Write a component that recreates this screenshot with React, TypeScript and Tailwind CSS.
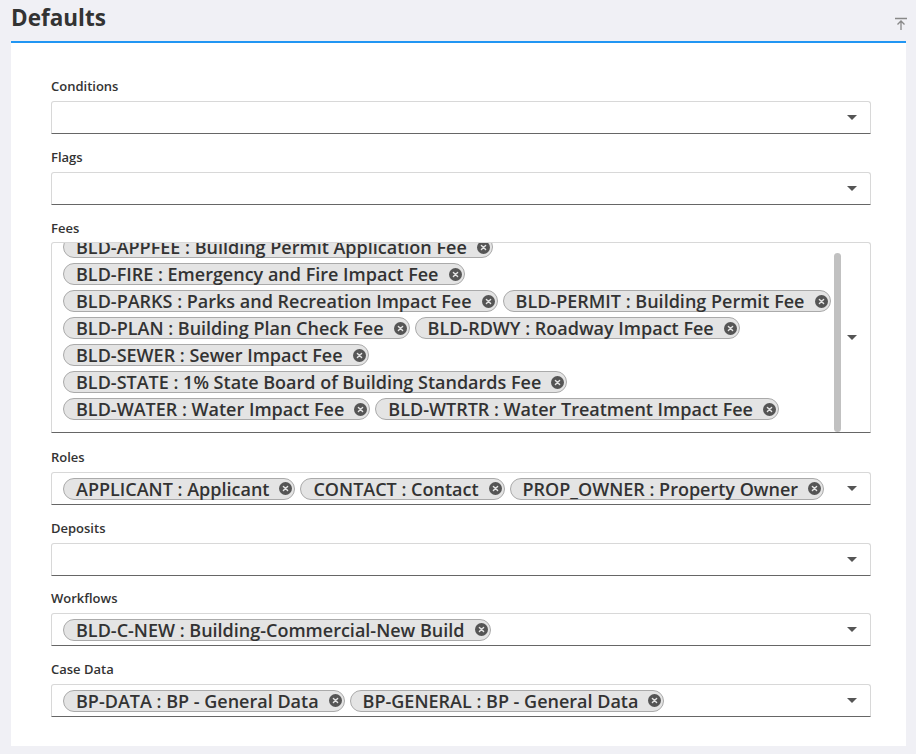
import React from "react";

const fees = [
  "BLD-APPFEE : Building Permit Application Fee",
  "BLD-FIRE : Emergency and Fire Impact Fee",
  "BLD-PARKS : Parks and Recreation Impact Fee",
  "BLD-PERMIT : Building Permit Fee",
  "BLD-PLAN : Building Plan Check Fee",
  "BLD-RDWY : Roadway Impact Fee",
  "BLD-SEWER : Sewer Impact Fee",
  "BLD-STATE : 1% State Board of Building Standards Fee",
  "BLD-WATER : Water Impact Fee",
  "BLD-WTRTR : Water Treatment Impact Fee",
];

const roles = ["APPLICANT : Applicant", "CONTACT : Contact", "PROP_OWNER : Property Owner"];
const workflows = ["BLD-C-NEW : Building-Commercial-New Build"];
const caseData = ["BP-DATA : BP - General Data", "BP-GENERAL : BP - General Data"];

function Chip({ text }: { text: string }) {
  return (
    <span className="inline-flex h-[22px] shrink-0 items-center whitespace-nowrap rounded-full border border-[#aaa] bg-[#e4e4e4] pl-3 pr-[2px] text-[18px] font-semibold leading-none text-[#333]">
      {text}
      <span className="ml-[10px] flex h-[13px] w-[13px] items-center justify-center rounded-full bg-[#555]">
        <svg viewBox="0 0 10 10" className="h-[7px] w-[7px]">
          <path d="M2 2l6 6M8 2l-6 6" stroke="#e4e4e4" strokeWidth="2" strokeLinecap="round" />
        </svg>
      </span>
    </span>
  );
}

function Caret() {
  return (
    <svg viewBox="0 0 10 5" className="h-[5px] w-[10px]">
      <path d="M0 0h10L5 5z" fill="#555" />
    </svg>
  );
}

function Field({
  label,
  items = [],
  className = "mb-[14px]",
}: {
  label: string;
  items?: string[];
  className?: string;
}) {
  return (
    <div className={className}>
      <div className="mb-[6px] text-[13px] font-semibold leading-[18px] text-[#333]">{label}</div>
      <div className="flex h-[33px] items-center rounded-t-[3px] border border-[#d8d8d8] border-b-[#666] bg-white">
        <div className="flex flex-1 gap-[5px] overflow-hidden pl-[11px]">
          {items.map((t) => (
            <Chip key={t} text={t} />
          ))}
        </div>
        <div className="flex w-9 justify-center">
          <Caret />
        </div>
      </div>
    </div>
  );
}

function FeesField() {
  return (
    <div className="mb-[15px]">
      <div className="mb-[5px] text-[13px] font-semibold leading-[18px] text-[#333]">Fees</div>
      <div className="flex h-[191px] rounded-t-[3px] border border-[#d8d8d8] border-b-[#666] bg-white">
        <div className="flex-1 overflow-hidden pl-[11px]">
          {/* list is scrolled a few px down, so the first row is clipped */}
          <div className="-mt-[7px] flex flex-wrap gap-x-[5px] gap-y-[5px]">
            {fees.map((t) => (
              <Chip key={t} text={t} />
            ))}
          </div>
        </div>
        <div className="mt-[10px] w-[7px] rounded-full bg-[#c1c1c1]" />
        <div className="flex w-[29px] items-center pl-[6px]">
          <Caret />
        </div>
      </div>
    </div>
  );
}

export default function App() {
  return (
    <div
      className="min-h-screen bg-[#f0f0f5] pl-[11px] pr-[10px]"
      style={{ fontFamily: '"Open Sans", "Noto Sans", sans-serif' }}
    >
      <div className="flex h-[41px] items-center justify-between pb-[4px]">
        <h1 className="text-[22.5px] font-bold leading-none text-[#333]">Defaults</h1>
        <svg viewBox="0 0 14 14" className="-mr-[2px] mt-[10px] h-[14px] w-[14px]" fill="none" stroke="#888" strokeWidth="1.3">
          <path d="M1 1.5h12M7 13V4M3.5 7.5L7 4l3.5 3.5" />
        </svg>
      </div>
      <div className="border-t-2 border-[#2196f3] bg-white pb-[15px] pl-10 pr-[35px] pt-[34px]">
        <Field label="Conditions" />
        <Field label="Flags" />
        <FeesField />
        <Field label="Roles" items={roles} />
        <Field label="Deposits" className="mb-[13px]" />
        <Field label="Workflows" items={workflows} />
        <Field label="Case Data" items={caseData} />
      </div>
    </div>
  );
}
